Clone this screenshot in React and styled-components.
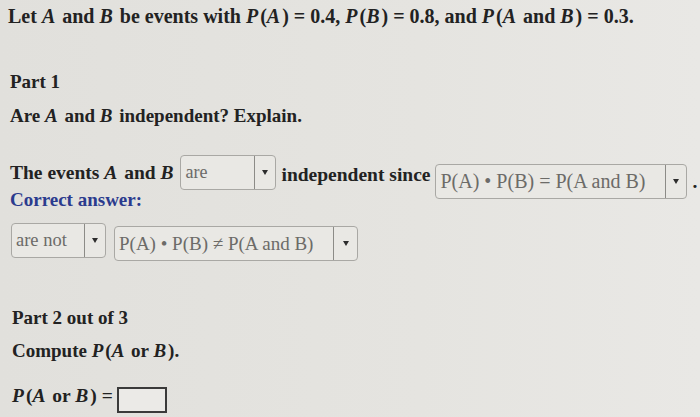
import React from 'react';
import styled, { createGlobalStyle } from 'styled-components';

const GlobalStyle = createGlobalStyle`
  html, body {
    margin: 0;
    padding: 0;
    background: #e4e3df;
  }
  body {
    font-family: "Liberation Serif", "Times New Roman", serif;
    color: #222;
  }
`;

const Page = styled.div`
  width: 700px;
  height: 417px;
  overflow: hidden;
  padding: 3px 0 0 8px;
  box-sizing: border-box;
  background: linear-gradient(90deg, #e1e0dc 0%, #e5e4e0 60%, #e9e8e5 100%);
`;

const Intro = styled.div`
  font-size: 20px;
  font-weight: bold;
  line-height: 26px;
  white-space: nowrap;
`;

const V = styled.i`
  font-weight: bold;
  margin-right: 2px;
`;

const Heading = styled.div`
  font-size: 19px;
  font-weight: bold;
  line-height: 24px;
  margin-top: ${p => p.$top || 0}px;
  padding-left: ${p => p.$left || 2}px;
  color: ${p => p.$blue ? '#2b3b8e' : '#222'};
  white-space: nowrap;
`;

const Row = styled.div`
  display: flex;
  align-items: flex-start;
  gap: ${p => p.$gap || 6}px;
  margin-top: ${p => p.$top || 0}px;
  padding-left: ${p => p.$left || 2}px;
  font-size: 19.5px;
  font-weight: bold;
  white-space: nowrap;
`;

const Label = styled.span`
  line-height: ${p => p.$lh || 35}px;
  margin-top: ${p => p.$mt || 0}px;
`;

const Select = styled.div`
  display: flex;
  align-items: stretch;
  width: ${p => p.$w}px;
  height: 35px;
  box-sizing: border-box;
  border: 1.5px solid #a9a8a4;
  border-radius: 4px;
  background: #e9e8e4;
  margin-top: ${p => p.$mt || 0}px;
  flex-shrink: 0;
`;

const SelectValue = styled.div`
  flex: 1;
  display: flex;
  align-items: center;
  padding-left: 4px;
  font-size: ${p => p.$size || 19}px;
  font-weight: normal;
  color: #6c6b68;
  border-right: 1.5px solid #8c8b87;
  overflow: hidden;
`;

const Caret = styled.div`
  width: ${p => p.$w || 20}px;
  display: flex;
  align-items: center;
  justify-content: center;
  &::after {
    content: "";
    border-left: 3.5px solid transparent;
    border-right: 3.5px solid transparent;
    border-top: 5px solid #2d2d2d;
  }
`;

const AnswerBox = styled.div`
  width: 50px;
  height: 26px;
  box-sizing: border-box;
  border: 2px solid #3a3a3a;
  background: #ebeae7;
  margin-top: 3px;
`;

function Dropdown({ value, w, size, mt, caret }) {
  return (
    <Select $w={w} $mt={mt}>
      <SelectValue $size={size}>{value}</SelectValue>
      <Caret $w={caret} />
    </Select>
  );
}

export default function App() {
  return (
    <>
      <GlobalStyle />
      <Page>
        <Intro>
          Let <V>A</V> and <V>B</V> be events with <V>P</V>(<V>A</V>) = 0.4, <V>P</V>(<V>B</V>) = 0.8, and <V>P</V>(<V>A</V> and <V>B</V>) = 0.3.
        </Intro>
        <Heading $top={41}>Part 1</Heading>
        <Heading $top={10}>Are <V>A</V> and <V>B</V> independent? Explain.</Heading>
        <Row $top={27} $gap={5}>
          <Label>The events <V>A</V> and <V>B</V></Label>
          <Dropdown value="are" w={96} size={18} />
          <Label $lh={40}>independent since</Label>
          <Dropdown value="P(A) • P(B) = P(A and B)" w={252} size={20} mt={9} />
          <Label $mt={9}>.</Label>
        </Row>
        <Heading $top={-11} $blue>Correct answer:</Heading>
        <Row $top={11} $gap={8} $left={3}>
          <Dropdown value="are not" w={95} size={18.5} />
          <Dropdown value="P(A) • P(B) ≠ P(A and B)" w={244} size={19} mt={3} caret={23} />
        </Row>
        <Heading $top={45} $left={4}>Part 2 out of 3</Heading>
        <Heading $top={9} $left={4}>Compute <V>P</V>(<V>A</V> or <V>B</V>).</Heading>
        <Row $top={21} $left={4} $gap={4}>
          <Label $lh={24}><V>P</V>(<V>A</V> or <V>B</V>) =</Label>
          <AnswerBox />
        </Row>
      </Page>
    </>
  );
}
